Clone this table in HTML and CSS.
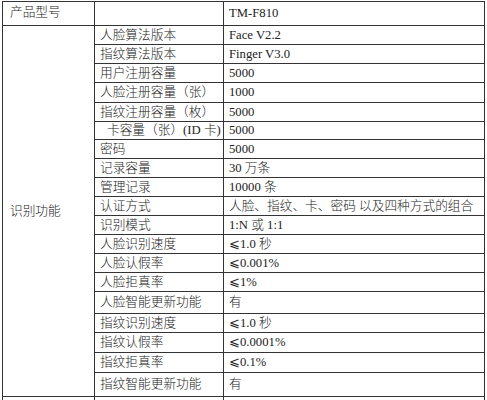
FILE: index.html
```html
<!DOCTYPE html>
<html>
<head>
<meta charset="utf-8">
<link rel="stylesheet" href="styles.css">
</head>
<body>
<table class="spec">
  <colgroup><col class="c1"><col class="c2"><col class="c3"></colgroup>
  <tr class="h24"><td class="lead top">产品型号</td><td></td><td>TM-F810</td></tr>
  <tr class="h19"><td class="lead" rowspan="19">识别功能</td><td>人脸算法版本</td><td>Face V2.2</td></tr>
  <tr class="h19"><td>指纹算法版本</td><td>Finger V3.0</td></tr>
  <tr class="h19"><td>用户注册容量</td><td>5000</td></tr>
  <tr class="h20"><td>人脸注册容量（张）</td><td>1000</td></tr>
  <tr class="h19"><td>指纹注册容量（枚）</td><td>5000</td></tr>
  <tr class="h18"><td class="indent">卡容量（张）(ID 卡)</td><td>5000</td></tr>
  <tr class="h19"><td>密码</td><td>5000</td></tr>
  <tr class="h19"><td>记录容量</td><td>30 万条</td></tr>
  <tr class="h19"><td>管理记录</td><td>10000 条</td></tr>
  <tr class="h19"><td>认证方式</td><td>人脸、指纹、卡、密码 以及四种方式的组合</td></tr>
  <tr class="h19"><td>识别模式</td><td>1:N 或 1:1</td></tr>
  <tr class="h19"><td>人脸识别速度</td><td>⩽1.0 秒</td></tr>
  <tr class="h19"><td>人脸认假率</td><td>⩽0.001%</td></tr>
  <tr class="h19"><td>人脸拒真率</td><td>⩽1%</td></tr>
  <tr class="h22"><td>人脸智能更新功能</td><td>有</td></tr>
  <tr class="h19"><td>指纹识别速度</td><td>⩽1.0 秒</td></tr>
  <tr class="h20"><td>指纹认假率</td><td>⩽0.0001%</td></tr>
  <tr class="h20"><td>指纹拒真率</td><td>⩽0.1%</td></tr>
  <tr class="h24"><td>指纹智能更新功能</td><td>有</td></tr>
  <tr class="h22"><td class="lead"></td><td>通信方式</td><td>TCP/IP 通讯接口</td></tr>
</table>
</body>
</html>
```

FILE: styles.css
```css
html, body {
  margin: 0;
  padding: 0;
  background: #ffffff;
}

body {
  padding: 1px 0 0 2px;
  font-family: "Liberation Serif", "Noto Sans CJK SC", serif;
  font-size: 12.7px;
  font-weight: 300;
  color: #222;
}

.spec {
  border-collapse: collapse;
  table-layout: fixed;
  width: 482px;
  border: 1px solid #666;
}

.c1 { width: 92px; }
.c2 { width: 129px; }
.c3 { width: 261px; }

.spec td {
  border: 1px solid #333;
  padding: 0 4px 0 5px;
  line-height: 15px;
  white-space: nowrap;
  overflow: hidden;
  vertical-align: middle;
}

.spec td.lead {
  padding-left: 7px;
}

.spec td.top {
  vertical-align: top;
  padding-top: 3px;
}

.spec td.indent {
  padding-left: 12px;
}

.h18 { height: 18px; }
.h19 { height: 19px; }
.h20 { height: 20px; }
.h22 { height: 22px; }
.h24 { height: 24px; }
```
